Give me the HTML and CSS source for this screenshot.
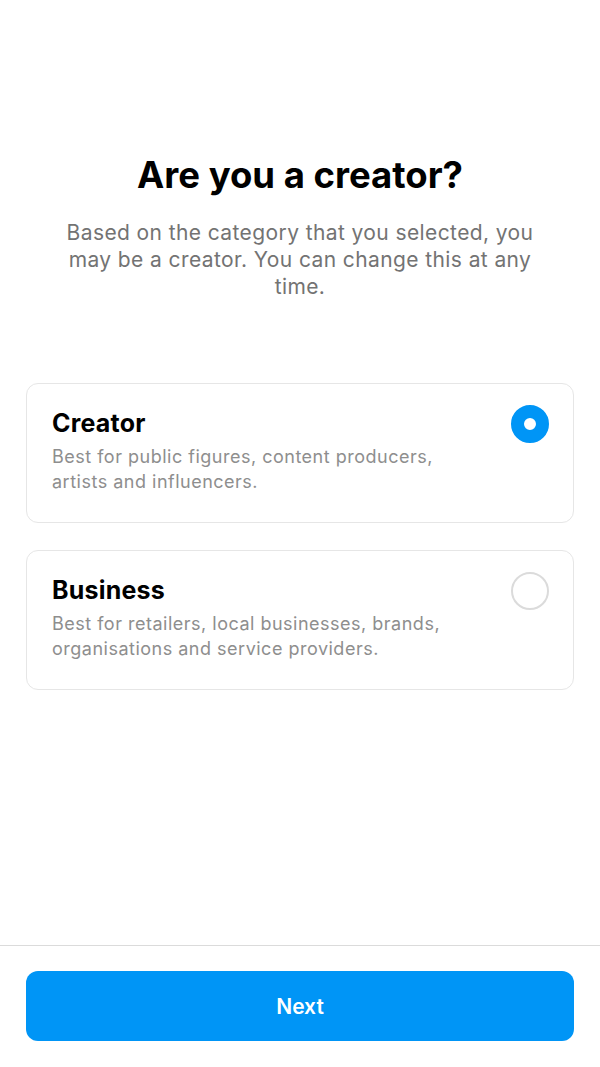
FILE: index.html
```html
<!DOCTYPE html>
<html lang="en">
<head>
  <meta charset="UTF-8">
  <title>Are you a creator?</title>
  <link rel="stylesheet" href="styles.css">
</head>
<body>

<main class="conteudo">
  <h1 class="titulo">Are you a creator?</h1>
  <p class="subtitulo">Based on the category that you selected, you may be a creator. You can change this at any time.</p>

  <div class="opcoes">
    <div class="opcao">
      <div class="opcao-texto">
        <h3>Creator</h3>
        <p>Best for public figures, content producers, artists and influencers.</p>
      </div>
      <div class="radio selecionado"></div>
    </div>

    <div class="opcao">
      <div class="opcao-texto">
        <h3>Business</h3>
        <p>Best for retailers, local businesses, brands, organisations and service providers.</p>
      </div>
      <div class="radio"></div>
    </div>
  </div>
</main>

<footer class="rodape">
  <button class="btn-next">Next</button>
</footer>

</body>
</html>
```

FILE: styles.css
```css
body {
  font-family: Inter, 'Noto Sans', sans-serif;
  margin: 0;
  padding: 0;
  background-color: #fff;
  height: 100vh;
  display: flex;
  flex-direction: column;
}

.conteudo {
  flex: 1;
  padding: 154px 26px 0;
}

.titulo {
  margin: 0;
  font-size: 36.5px;
  line-height: 42px;
  font-weight: 700;
  color: #000;
  text-align: center;
}

.subtitulo {
  margin: 23px auto 0;
  max-width: 476px;
  font-size: 21px;
  line-height: 27px;
  letter-spacing: 0.4px;
  color: #737373;
  text-align: center;
}

.opcoes {
  margin-top: 83px;
  display: flex;
  flex-direction: column;
  gap: 27px;
}

.opcao {
  display: flex;
  align-items: flex-start;
  justify-content: space-between;
  height: 140px;
  box-sizing: border-box;
  border: 1px solid #e6e6e6;
  border-radius: 12px;
  padding: 24px 24px 0 25px;
}

.opcao-texto h3 {
  margin: 0;
  font-size: 25px;
  line-height: 30px;
  font-weight: 700;
  letter-spacing: 0.2px;
  color: #000;
}

.opcao-texto p {
  margin: 6px 0 0;
  max-width: 420px;
  font-size: 18px;
  line-height: 25px;
  letter-spacing: 0.5px;
  color: #8e8e8e;
}

.radio {
  flex-shrink: 0;
  width: 38px;
  height: 38px;
  box-sizing: border-box;
  border: 2px solid #dbdbdb;
  border-radius: 50%;
  margin-top: -3px;
}

.radio.selecionado {
  border: 13px solid #0095f6;
  background-color: #fff;
}

.rodape {
  border-top: 1px solid #dbdbdb;
  padding: 25px 26px 26px;
}

.btn-next {
  display: block;
  width: 100%;
  height: 70px;
  background-color: #0095f6;
  color: #fff;
  border: none;
  border-radius: 12px;
  font-family: Inter, 'Noto Sans', sans-serif;
  font-size: 21px;
  font-weight: 600;
  cursor: pointer;
}
```
